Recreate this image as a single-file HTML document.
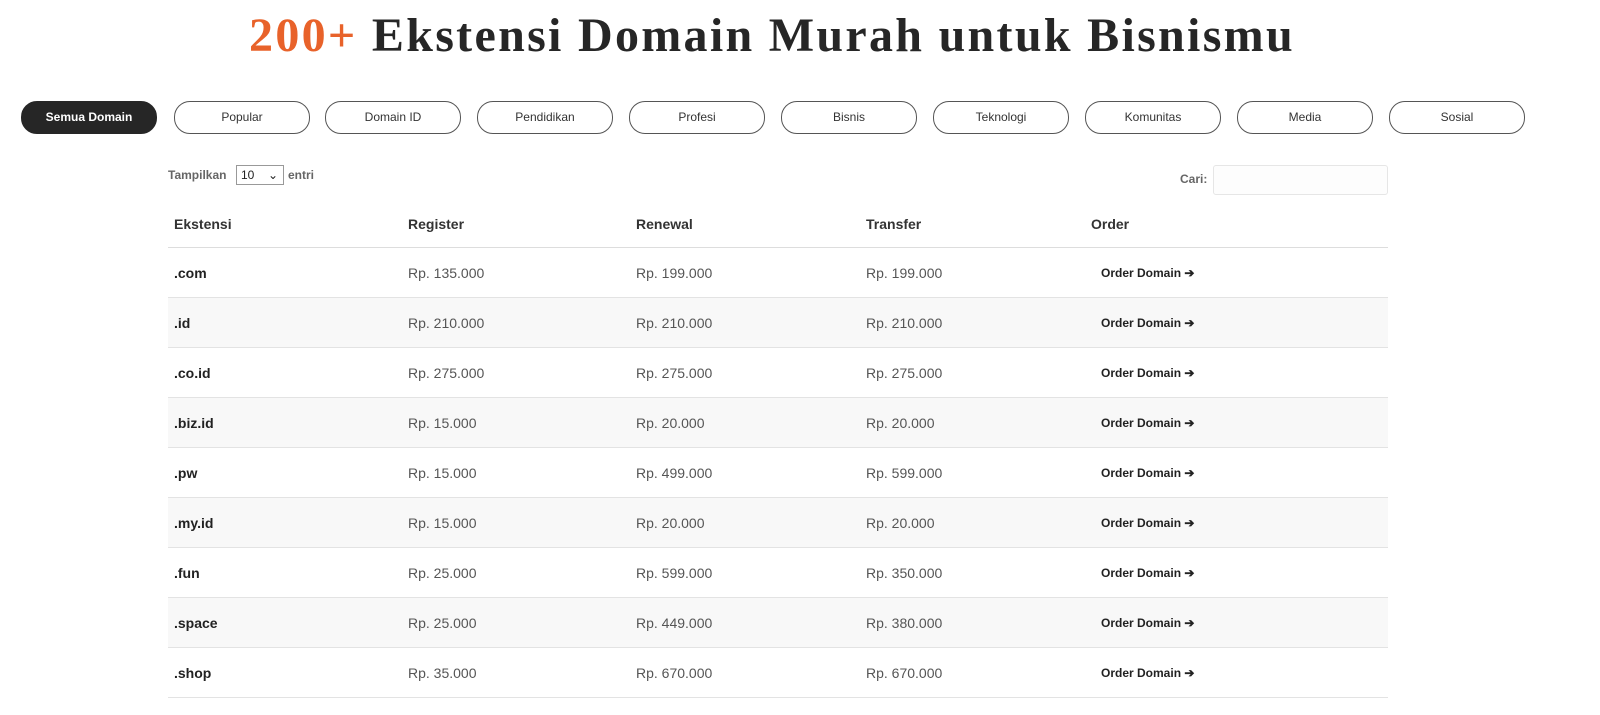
<!DOCTYPE html>
<html><head><meta charset="utf-8"><style>
body{margin:0;width:1600px;height:715px;background:#fff;font-family:"Liberation Sans",sans-serif;color:#222;overflow:hidden;position:relative}
h1{position:absolute;top:8px;left:0;width:1544px;text-align:center;margin:0;font-family:"Liberation Serif",serif;font-weight:bold;font-size:48px;letter-spacing:2.3px;color:#262626}
h1 span{color:#e8622a}
.btn{position:absolute;top:101px;width:134px;height:31px;border:1px solid #555;border-radius:16px;font-size:12px;text-align:center;line-height:31px;color:#333}
.btn.on{background:#262626;color:#fff;font-weight:bold;border-color:#262626}
.lbl{position:absolute;font-size:12px;color:#666;font-weight:bold}
.sel{position:absolute;left:236px;top:165px;border:1px solid #999;font-size:12px;line-height:18px;padding-left:4px;box-sizing:border-box;width:48px;height:20px}
.search{position:absolute;left:1213px;top:165px;width:173px;height:28px;border:1px solid #e6e6e6;border-radius:3px;background:#fdfdfd}
table{position:absolute;left:168px;top:200px;width:1220px;border-collapse:collapse;font-size:14px}
th,td{padding:0}
th{text-align:left;font-weight:bold;height:47px;border-bottom:1px solid #ddd;color:#333}
td{height:49px;border-bottom:1px solid #e3e3e3;color:#555}
td:first-child{color:#222;font-weight:bold}
tr:nth-child(odd) td{background:#f8f8f8}
td.o{font-size:12px;font-weight:bold;color:#222}
</style></head><body>
<h1><span>200+</span> Ekstensi Domain Murah untuk Bisnismu</h1>
<div class="btn on" style="left:21px">Semua Domain</div>
<div class="btn" style="left:174px">Popular</div>
<div class="btn" style="left:325px">Domain ID</div>
<div class="btn" style="left:477px">Pendidikan</div>
<div class="btn" style="left:629px">Profesi</div>
<div class="btn" style="left:781px">Bisnis</div>
<div class="btn" style="left:933px">Teknologi</div>
<div class="btn" style="left:1085px">Komunitas</div>
<div class="btn" style="left:1237px">Media</div>
<div class="btn" style="left:1389px">Sosial</div>
<div class="lbl" style="left:168px;top:168px">Tampilkan</div>
<div class="sel">10 <span style="position:absolute;right:5px;top:0">&#8964;</span></div>
<div class="lbl" style="left:288px;top:168px">entri</div>
<div class="lbl" style="left:1180px;top:172px">Cari:</div>
<div class="search"></div>
<table>
<tr><th style="width:234px;padding-left:6px">Ekstensi</th><th style="width:228px">Register</th><th style="width:230px">Renewal</th><th style="width:225px">Transfer</th><th>Order</th></tr>
<tr><td style="padding-left:6px">.com</td><td>Rp. 135.000</td><td>Rp. 199.000</td><td>Rp. 199.000</td><td class="o">&nbsp;&nbsp;&nbsp;Order Domain ➔</td></tr>
<tr><td style="padding-left:6px">.id</td><td>Rp. 210.000</td><td>Rp. 210.000</td><td>Rp. 210.000</td><td class="o">&nbsp;&nbsp;&nbsp;Order Domain ➔</td></tr>
<tr><td style="padding-left:6px">.co.id</td><td>Rp. 275.000</td><td>Rp. 275.000</td><td>Rp. 275.000</td><td class="o">&nbsp;&nbsp;&nbsp;Order Domain ➔</td></tr>
<tr><td style="padding-left:6px">.biz.id</td><td>Rp. 15.000</td><td>Rp. 20.000</td><td>Rp. 20.000</td><td class="o">&nbsp;&nbsp;&nbsp;Order Domain ➔</td></tr>
<tr><td style="padding-left:6px">.pw</td><td>Rp. 15.000</td><td>Rp. 499.000</td><td>Rp. 599.000</td><td class="o">&nbsp;&nbsp;&nbsp;Order Domain ➔</td></tr>
<tr><td style="padding-left:6px">.my.id</td><td>Rp. 15.000</td><td>Rp. 20.000</td><td>Rp. 20.000</td><td class="o">&nbsp;&nbsp;&nbsp;Order Domain ➔</td></tr>
<tr><td style="padding-left:6px">.fun</td><td>Rp. 25.000</td><td>Rp. 599.000</td><td>Rp. 350.000</td><td class="o">&nbsp;&nbsp;&nbsp;Order Domain ➔</td></tr>
<tr><td style="padding-left:6px">.space</td><td>Rp. 25.000</td><td>Rp. 449.000</td><td>Rp. 380.000</td><td class="o">&nbsp;&nbsp;&nbsp;Order Domain ➔</td></tr>
<tr><td style="padding-left:6px">.shop</td><td>Rp. 35.000</td><td>Rp. 670.000</td><td>Rp. 670.000</td><td class="o">&nbsp;&nbsp;&nbsp;Order Domain ➔</td></tr>
</table>
</body></html>
